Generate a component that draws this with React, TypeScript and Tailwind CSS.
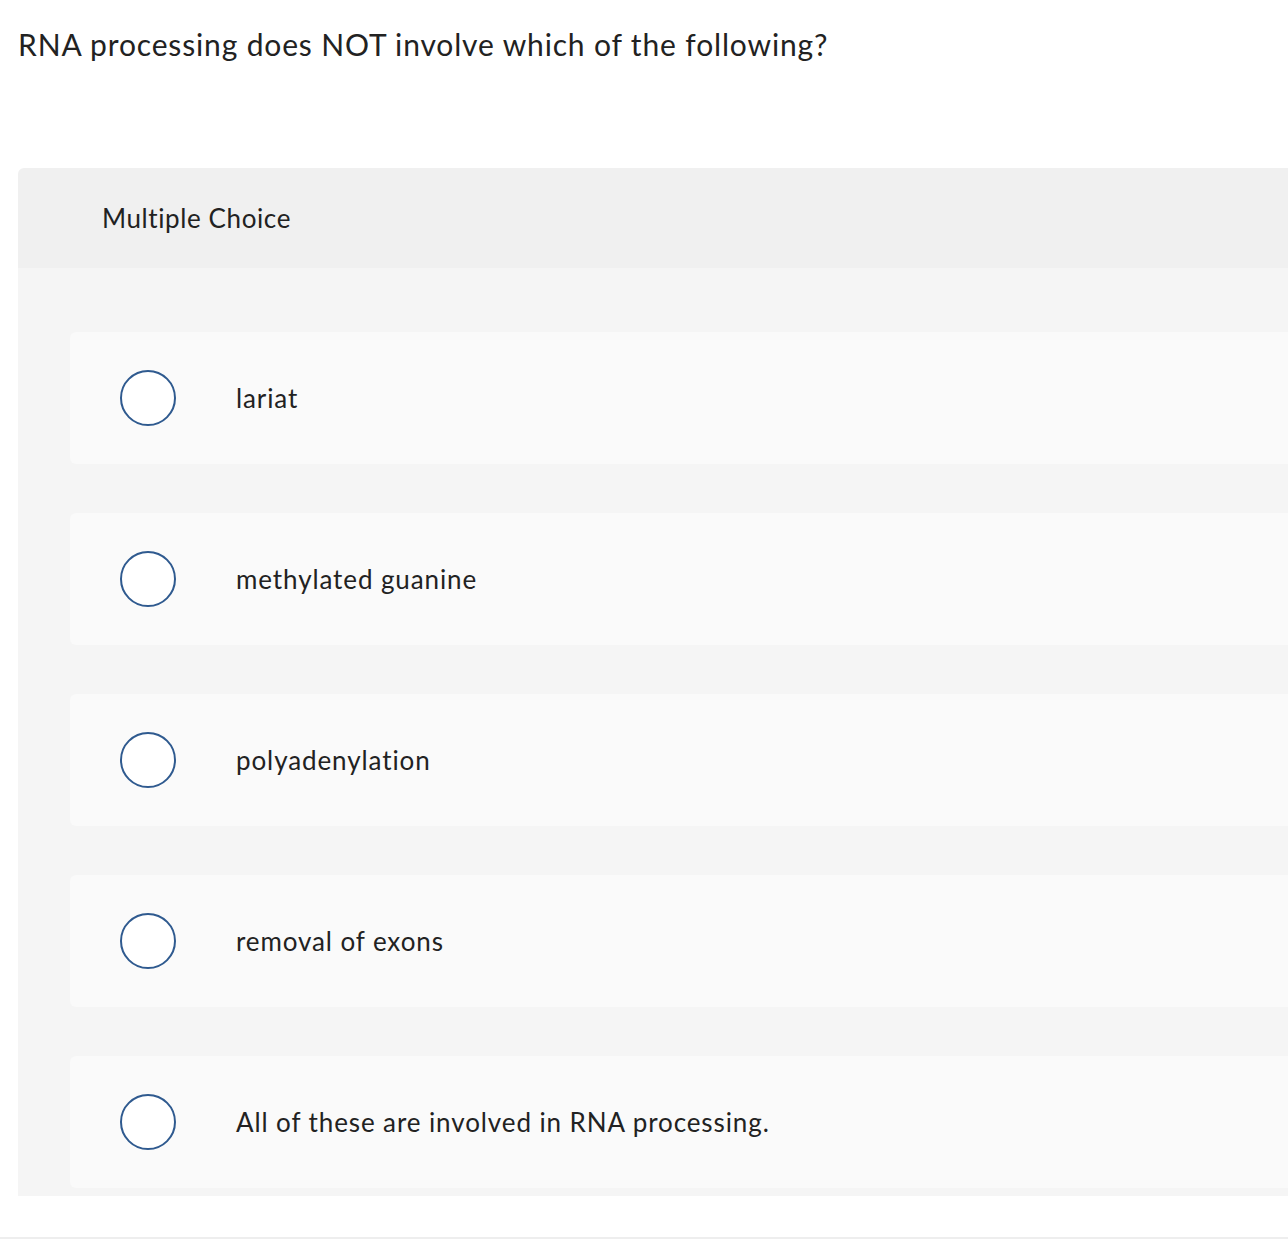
const options = [
  "lariat",
  "methylated guanine",
  "polyadenylation",
  "removal of exons",
  "All of these are involved in RNA processing.",
];

function Option({ label }: { label: string }) {
  return (
    <div className="flex h-[132px] items-center rounded-l-md bg-[#fafafa] pl-[50px]">
      <span className="block h-[56px] w-[56px] shrink-0 rounded-full border-2 border-[#2f5a8f] bg-white" />
      <span className="ml-[60px] text-[26px] leading-[32px] tracking-[0.9px] text-[#222]">{label}</span>
    </div>
  );
}

export default function App() {
  return (
    <div className="min-h-[1246px] bg-white font-['Lato',sans-serif] text-[#222]">
      <div className="pl-[18px]">
        <h1 className="pt-[26px] text-[30px] font-normal leading-[36px] tracking-[0.85px]">
          RNA processing does NOT involve which of the following?
        </h1>
        <div className="mt-[106px] overflow-hidden rounded-tl-md">
          <div className="flex h-[100px] items-center bg-[#f0f0f0] pl-[84px]">
            <span className="text-[26px] leading-[32px] tracking-[0.6px]">Multiple Choice</span>
          </div>
          <div className="flex flex-col gap-[49px] bg-[#f5f5f5] pb-[8px] pl-[52px] pt-[64px]">
            {options.map((o) => (
              <Option key={o} label={o} />
            ))}
          </div>
        </div>
      </div>
      <div className="mt-[41px] h-[2px] bg-[#eeeeee]" />
    </div>
  );
}
